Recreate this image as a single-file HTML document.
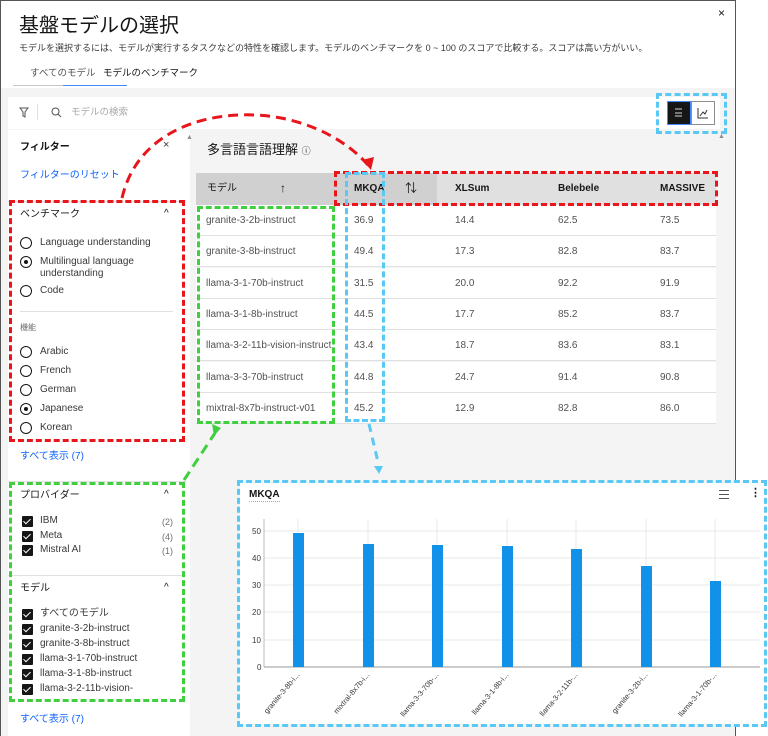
<!DOCTYPE html>
<html><head><meta charset="utf-8"><style>
*{margin:0;padding:0;box-sizing:border-box}
body{width:768px;height:736px;background:#fff;position:relative;overflow:hidden;font-family:"Liberation Sans","Noto Sans CJK JP",sans-serif;color:#161616}
.a{position:absolute;line-height:1.2}
.t{font-size:10px;color:#393939;white-space:nowrap;line-height:12px}
.radio{position:absolute;width:12px;height:12px;border:1px solid #161616;border-radius:50%}
.radio.on::after{content:"";position:absolute;left:3px;top:3px;width:4px;height:4px;background:#161616;border-radius:50%}
.cb{position:absolute;width:11px;height:11px;background:#161616;border-radius:1px}
.cb::after{content:"";position:absolute;left:3px;top:1px;width:3px;height:6px;border:solid #fff;border-width:0 1.3px 1.3px 0;transform:rotate(45deg)}
.row{position:absolute;left:196px;width:520px;height:31px;background:#fff;border-bottom:1px solid #e0e0e0}
.row span{position:absolute;top:10px;font-size:10px;line-height:12px;color:#525252;white-space:nowrap}
.dash{position:absolute;border:3px dashed}
</style></head><body>
<div class="a" style="left:0;top:0;width:736px;height:736px;border:1px solid #555;border-bottom:none;background:#fff"></div>
<div class="a" style="left:19px;top:14px;font-size:20px;line-height:24px;color:#161616">基盤モデルの選択</div>
<div class="a" style="left:718px;top:6px;font-size:12px">×</div>
<div class="a t" style="left:19px;top:42px;font-size:9px;color:#393939">モデルを選択するには、モデルが実行するタスクなどの特性を確認します。モデルのベンチマークを 0 ~ 100 のスコアで比較する。スコアは高い方がいい。</div>
<div class="a t" style="left:30px;top:68px;font-size:9.5px;color:#525252">すべてのモデル</div>
<div class="a t" style="left:103px;top:68px;font-size:9.5px;color:#161616">モデルのベンチマーク</div>
<div class="a" style="left:13px;top:85px;width:50px;height:1px;background:#c6c6c6"></div>
<div class="a" style="left:63px;top:85px;width:64px;height:1px;background:#4589ff"></div>
<!-- gray body -->
<div class="a" style="left:1px;top:88px;width:734px;height:648px;background:#f4f4f4"></div>
<div class="a" style="left:8px;top:97px;width:712px;height:32px;background:#fff"></div>
<svg class="a" style="left:19px;top:107px" width="10" height="11"><path d="M1 1H9L6 5V10L4 9V5Z" stroke="#525252" fill="none"/></svg>
<div class="a" style="left:37px;top:104px;width:1px;height:16px;background:#e0e0e0"></div>
<svg class="a" style="left:51px;top:107px" width="11" height="11"><circle cx="4.5" cy="4.5" r="3.5" stroke="#525252" fill="none"/><path d="M7 7L10 10" stroke="#525252"/></svg>
<div class="a t" style="left:71px;top:107px;font-size:9.5px;color:#a8a8a8">モデルの検索</div>
<div class="a" style="left:667px;top:101px;width:24px;height:24px;background:#161616;border:1px solid #4589ff"></div>
<div class="a" style="left:675px;top:108px;width:7px;height:9px;border-top:2px solid #777;border-bottom:2px solid #777"></div>
<div class="a" style="left:675px;top:111.5px;width:7px;height:2px;background:#777"></div>
<div class="a" style="left:691px;top:101px;width:24px;height:24px;background:#fff;border:1px solid #8d8d8d"></div>
<svg class="a" style="left:697px;top:107px" width="12" height="12"><path d="M1 1V11H11M3 9L6 5L8 7L10 3" stroke="#333" fill="none" stroke-width="1"/></svg>
<!-- sidebar -->
<div class="a" style="left:8px;top:130px;width:182px;height:606px;background:#fff"></div>
<div class="a" style="left:186px;top:134px;font-size:7px;color:#8d8d8d">▲</div>
<div class="a" style="left:20px;top:142px;font-size:10px;font-weight:bold">フィルター</div>
<div class="a" style="left:163px;top:139px;font-size:11px;color:#393939">×</div>
<div class="a" style="left:20px;top:170px;font-size:10px;color:#0f62fe">フィルターのリセット</div>
<div class="a" style="left:8px;top:201px;width:178px;height:1px;background:#e0e0e0"></div>
<div class="a" style="left:20px;top:209px;font-size:10px">ベンチマーク</div>
<div class="a" style="left:164px;top:208px;font-size:10px">^</div>
<div class="radio" style="left:20px;top:237px"></div><div class="a t" style="left:40px;top:237px">Language understanding</div>
<div class="radio on" style="left:20px;top:256px"></div><div class="a t" style="left:40px;top:256px;line-height:12px">Multilingual language<br>understanding</div>
<div class="radio" style="left:20px;top:285px"></div><div class="a t" style="left:40px;top:285px">Code</div>
<div class="a" style="left:20px;top:311px;width:153px;height:1px;background:#e0e0e0"></div>
<div class="a t" style="left:20px;top:322px;font-size:8px;color:#6f6f6f">機能</div>
<div class="radio" style="left:20px;top:346px"></div><div class="a t" style="left:40px;top:346px">Arabic</div>
<div class="radio" style="left:20px;top:365px"></div><div class="a t" style="left:40px;top:365px">French</div>
<div class="radio" style="left:20px;top:384px"></div><div class="a t" style="left:40px;top:384px">German</div>
<div class="radio on" style="left:20px;top:403px"></div><div class="a t" style="left:40px;top:403px">Japanese</div>
<div class="radio" style="left:20px;top:422px"></div><div class="a t" style="left:40px;top:422px">Korean</div>
<div class="a t" style="left:20px;top:451px;color:#0f62fe">すべて表示 (7)</div>
<div class="a" style="left:8px;top:481px;width:178px;height:1px;background:#e0e0e0"></div>
<div class="a" style="left:20px;top:490px;font-size:10px">プロバイダー</div>
<div class="a" style="left:164px;top:489px;font-size:10px">^</div>
<div class="cb" style="left:22px;top:516px"></div><div class="a t" style="left:40px;top:515px">IBM</div><div class="a t" style="left:162px;top:516px;font-size:9px;color:#6f6f6f">(2)</div>
<div class="cb" style="left:22px;top:531px"></div><div class="a t" style="left:40px;top:530px">Meta</div><div class="a t" style="left:162px;top:531px;font-size:9px;color:#6f6f6f">(4)</div>
<div class="cb" style="left:22px;top:545px"></div><div class="a t" style="left:40px;top:544px">Mistral AI</div><div class="a t" style="left:162px;top:545px;font-size:9px;color:#6f6f6f">(1)</div>
<div class="a" style="left:8px;top:575px;width:178px;height:1px;background:#e0e0e0"></div>
<div class="a" style="left:20px;top:583px;font-size:10px">モデル</div>
<div class="a" style="left:164px;top:582px;font-size:10px">^</div>
<div class="cb" style="left:22px;top:609px"></div><div class="a t" style="left:40px;top:608px">すべてのモデル</div>
<div class="cb" style="left:22px;top:624px"></div><div class="a t" style="left:40px;top:623px">granite-3-2b-instruct</div>
<div class="cb" style="left:22px;top:639px"></div><div class="a t" style="left:40px;top:638px">granite-3-8b-instruct</div>
<div class="cb" style="left:22px;top:654px"></div><div class="a t" style="left:40px;top:653px">llama-3-1-70b-instruct</div>
<div class="cb" style="left:22px;top:669px"></div><div class="a t" style="left:40px;top:668px">llama-3-1-8b-instruct</div>
<div class="cb" style="left:22px;top:684px"></div><div class="a t" style="left:40px;top:683px">llama-3-2-11b-vision-</div>
<div class="a t" style="left:20px;top:714px;color:#0f62fe">すべて表示 (7)</div>
<!-- main -->
<div class="a" style="left:718px;top:133px;font-size:7px;color:#8d8d8d">▲</div>
<div class="a" style="left:207px;top:142px;font-size:13px;color:#161616">多言語言語理解 <span style="font-size:9px">ⓘ</span></div>
<div class="a" style="left:196px;top:173px;width:520px;height:32px;background:#e0e0e0"></div>
<div class="a" style="left:196px;top:173px;width:241px;height:32px;background:#d0d0d0"></div>
<div class="a t" style="left:207px;top:183px;color:#161616">モデル</div>
<div class="a" style="left:280px;top:181px;font-size:12px;line-height:14px">↑</div>
<div class="a t" style="left:354px;top:183px;color:#161616;font-weight:bold">MKQA</div>
<div class="a" style="left:405px;top:181px;font-size:12px;line-height:14px">⇅</div>
<div class="a t" style="left:455px;top:183px;color:#161616;font-weight:bold">XLSum</div>
<div class="a t" style="left:558px;top:183px;color:#161616;font-weight:bold">Belebele</div>
<div class="a t" style="left:660px;top:183px;color:#161616;font-weight:bold">MASSIVE</div>
<div class="row" style="top:205px"><span style="left:10px">granite-3-2b-instruct</span><span style="left:158px">36.9</span><span style="left:259px">14.4</span><span style="left:362px">62.5</span><span style="left:464px">73.5</span></div>
<div class="row" style="top:236px"><span style="left:10px">granite-3-8b-instruct</span><span style="left:158px">49.4</span><span style="left:259px">17.3</span><span style="left:362px">82.8</span><span style="left:464px">83.7</span></div>
<div class="row" style="top:268px"><span style="left:10px">llama-3-1-70b-instruct</span><span style="left:158px">31.5</span><span style="left:259px">20.0</span><span style="left:362px">92.2</span><span style="left:464px">91.9</span></div>
<div class="row" style="top:299px"><span style="left:10px">llama-3-1-8b-instruct</span><span style="left:158px">44.5</span><span style="left:259px">17.7</span><span style="left:362px">85.2</span><span style="left:464px">83.7</span></div>
<div class="row" style="top:330px"><span style="left:10px">llama-3-2-11b-vision-instruct</span><span style="left:158px">43.4</span><span style="left:259px">18.7</span><span style="left:362px">83.6</span><span style="left:464px">83.1</span></div>
<div class="row" style="top:362px"><span style="left:10px">llama-3-3-70b-instruct</span><span style="left:158px">44.8</span><span style="left:259px">24.7</span><span style="left:362px">91.4</span><span style="left:464px">90.8</span></div>
<div class="row" style="top:393px"><span style="left:10px">mixtral-8x7b-instruct-v01</span><span style="left:158px">45.2</span><span style="left:259px">12.9</span><span style="left:362px">82.8</span><span style="left:464px">86.0</span></div>
<!-- chart panel -->
<div class="a" style="left:240px;top:483px;width:526px;height:241px;background:#fff"></div>
<div class="a" style="left:249px;top:489px;font-size:10px;line-height:12px;font-weight:bold;border-bottom:1px dotted #aaa">MKQA</div>
<div class="a" style="left:719px;top:490px;width:10px;height:9px;border-top:1px solid #555;border-bottom:1px solid #555"></div>
<div class="a" style="left:719px;top:494px;width:10px;height:1px;background:#555"></div>
<div class="a" style="left:750px;top:487px;font-size:11px;font-weight:bold">⋮</div>
<svg class="a" style="left:240px;top:515px" width="526" height="210" font-family="Liberation Sans" font-size="8" fill="#393939">
<g stroke="#e8e8e8" stroke-width="1">
<line x1="24" y1="16" x2="520" y2="16"/><line x1="24" y1="43" x2="520" y2="43"/><line x1="24" y1="70" x2="520" y2="70"/><line x1="24" y1="97" x2="520" y2="97"/><line x1="24" y1="125" x2="520" y2="125"/>
<line x1="58" y1="4" x2="58" y2="152"/><line x1="128" y1="4" x2="128" y2="152"/><line x1="197" y1="4" x2="197" y2="152"/><line x1="267" y1="4" x2="267" y2="152"/><line x1="336" y1="4" x2="336" y2="152"/><line x1="406" y1="4" x2="406" y2="152"/><line x1="475" y1="4" x2="475" y2="152"/>
</g>
<line x1="24" y1="4" x2="24" y2="152" stroke="#bbb"/><line x1="24" y1="152" x2="520" y2="152" stroke="#999"/>
<text x="12" y="19">50</text><text x="12" y="46">40</text><text x="12" y="73">30</text><text x="12" y="100">20</text><text x="12" y="128">10</text><text x="17" y="155">0</text>
<g fill="#1192e8">
<rect x="53" y="18" width="11" height="134"/><rect x="123" y="29" width="11" height="123"/><rect x="192" y="30" width="11" height="122"/><rect x="262" y="31" width="11" height="121"/><rect x="331" y="34" width="11" height="118"/><rect x="401" y="51" width="11" height="101"/><rect x="470" y="66" width="11" height="86"/>
</g>
<g font-size="7.5">
<text transform="translate(60,160) rotate(-50)" text-anchor="end">granite-3-8b-i...</text>
<text transform="translate(130,160) rotate(-50)" text-anchor="end">mixtral-8x7b-i...</text>
<text transform="translate(199,160) rotate(-50)" text-anchor="end">llama-3-3-70b-...</text>
<text transform="translate(269,160) rotate(-50)" text-anchor="end">llama-3-1-8b-i...</text>
<text transform="translate(338,160) rotate(-50)" text-anchor="end">llama-3-2-11b-...</text>
<text transform="translate(408,160) rotate(-50)" text-anchor="end">granite-3-2b-i...</text>
<text transform="translate(477,160) rotate(-50)" text-anchor="end">llama-3-1-70b-...</text>
</g>
</svg>
<!-- dashed annotation boxes -->
<div class="dash" style="left:9px;top:200px;width:176px;height:242px;border-color:#e8151b"></div>
<div class="dash" style="left:334px;top:171px;width:384px;height:35px;border-color:#e8151b"></div>
<div class="dash" style="left:197px;top:206px;width:138px;height:218px;border-color:#3fcf3f"></div>
<div class="dash" style="left:345px;top:172px;width:40px;height:250px;border-color:#5ac8f5"></div>
<div class="dash" style="left:656px;top:93px;width:71px;height:41px;border-color:#5ac8f5"></div>
<div class="dash" style="left:9px;top:482px;width:176px;height:220px;border-color:#3fcf3f"></div>
<div class="dash" style="left:237px;top:480px;width:530px;height:247px;border-color:#5ac8f5"></div>
<svg class="a" style="left:0;top:0" width="768" height="736">
<path d="M122 198 C140 120 230 105 290 120 C330 130 355 150 368 165" stroke="#e8151b" stroke-width="3" stroke-dasharray="10,6" fill="none"/>
<path d="M362 160 L371 170 L374 157 Z" fill="#e8151b"/>
<path d="M184 480 L215 433" stroke="#3fcf3f" stroke-width="3" stroke-dasharray="10,6" fill="none"/>
<path d="M212 424 L221 428 L214 436 Z" fill="#3fcf3f"/>
<path d="M369 424 L378 462" stroke="#5ac8f5" stroke-width="3" stroke-dasharray="8,6" fill="none"/>
<path d="M374 466 L383 466 L379 474 Z" fill="#5ac8f5"/>
</svg>
</body></html>
